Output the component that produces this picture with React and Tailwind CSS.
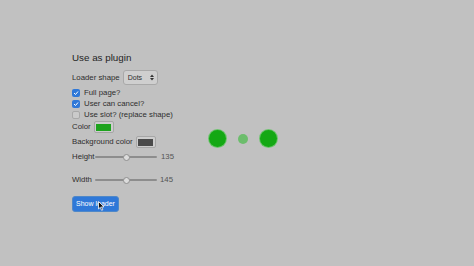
export default function App() {
  const font = { fontFamily: '"Liberation Sans", Arial, sans-serif' }
  return (
    <div className="relative flex h-[266px] w-[474px] bg-[#c1c1c1] text-[#2e2e2e]" style={font}>
      {/* Settings panel */}
      <div className="flex w-[200px] flex-col whitespace-nowrap pl-[72px] pt-[53px] text-[7.8px] leading-none">
        <div className="text-[9.8px] font-medium leading-none text-[#1f1f1f]">Use as plugin</div>

        <div className="mt-[7px] flex h-[16px] items-center gap-[3px]">
          <span>Loader shape</span>
          <div className="flex h-[15px] w-[35px] items-center justify-between rounded-[3px] border border-[#a9a9a9] bg-[#cfcfcf] pl-[4px] pr-[3px] text-[7px]">
            <span>Dots</span>
            <svg width="4" height="7" viewBox="0 0 4 7">
              <path d="M0 3 L2 0.5 L4 3 Z M0 4 L2 6.5 L4 4 Z" fill="#333" />
            </svg>
          </div>
        </div>

        <div className="mt-[2px] flex h-[11px] items-center gap-[4px]">
          <Check on />
          <span>Full page?</span>
        </div>
        <div className="flex h-[11px] items-center gap-[4px]">
          <Check on />
          <span>User can cancel?</span>
        </div>
        <div className="flex h-[11px] items-center gap-[4px]">
          <Check />
          <span>Use slot? (replace shape)</span>
        </div>

        <div className="flex h-[13px] items-center gap-[3px]">
          <span>Color</span>
          <Swatch color="#1ea31e" />
        </div>

        <div className="mt-[2px] flex h-[13px] items-center gap-[3px]">
          <span>Background color</span>
          <Swatch color="#4a4a4a" />
        </div>

        <div className="mt-[2px] flex h-[13px] items-center gap-[2px]">
          <span className="w-[21px]">Height</span>
          <Slider />
          <span className="ml-[2px] text-[#555]">135</span>
        </div>

        <div className="mt-[10px] flex h-[13px] items-center gap-[2px]">
          <span className="w-[21px]">Width</span>
          <Slider />
          <span className="ml-[1px] text-[#555]">145</span>
        </div>

        <div className="mt-[9px]">
          <button className="h-[16px] w-[47px] rounded-[3px] border border-[#4f88c8] bg-[#2f78d8] text-[7px] text-white">
            Show loader
          </button>
        </div>
      </div>

      {/* Loader dots */}
      <div className="flex flex-1 items-start pl-[9px] pt-[130px]">
        <div className="flex items-center gap-[12px]">
          <div className="h-[17px] w-[17px] rounded-full bg-[#14a814] ring-1 ring-[#6ec46e]" />
          <div className="h-[10px] w-[10px] rounded-full bg-[#6cbd6c]" />
          <div className="h-[17px] w-[17px] rounded-full bg-[#14a814] ring-1 ring-[#6ec46e]" />
        </div>
      </div>

      {/* mouse cursor */}
      <svg className="absolute left-[98px] top-[201px]" width="7" height="10" viewBox="0 0 7 10">
        <path d="M0.5 0.5 L0.5 8 L2.3 6.3 L3.6 9.3 L4.8 8.8 L3.5 5.9 L6 5.9 Z" fill="#111" stroke="#fff" strokeWidth="0.8" />
      </svg>
    </div>
  )
}

function Check({ on }) {
  return on ? (
    <span className="flex h-[8px] w-[8px] items-center justify-center rounded-[2px] bg-[#2f78d8]">
      <svg width="6" height="6" viewBox="0 0 6 6">
        <path d="M1 3 L2.5 4.5 L5 1.5" fill="none" stroke="#fff" strokeWidth="1" />
      </svg>
    </span>
  ) : (
    <span className="h-[8px] w-[8px] rounded-[2px] border border-[#a8a8a8] bg-[#cacaca]" />
  )
}

function Swatch({ color }) {
  return (
    <span className="flex h-[12px] w-[20px] items-center justify-center rounded-[2px] border border-[#a6a6a6] bg-[#cdcdcd]">
      <span className="h-[7px] w-[15px]" style={{ backgroundColor: color }} />
    </span>
  )
}

function Slider() {
  return (
    <div className="relative flex h-[8px] w-[62px] items-center">
      <div className="h-[2px] w-full rounded bg-[#8d8d8d]" />
      <div className="absolute left-[28px] h-[7px] w-[7px] rounded-full border border-[#909090] bg-[#dcdcdc]" />
    </div>
  )
}
